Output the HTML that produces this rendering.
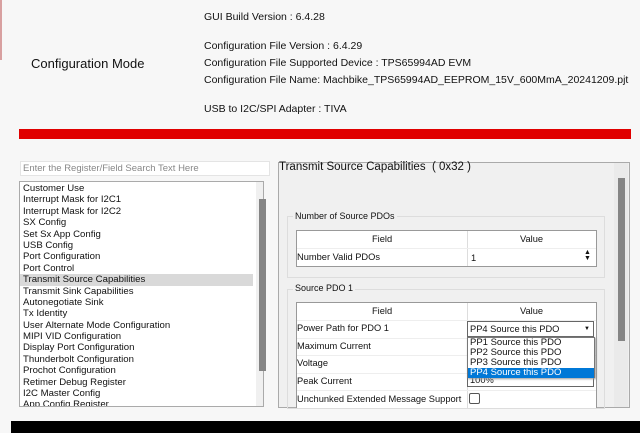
<!DOCTYPE html>
<html><head><style>
body{margin:0;width:640px;height:433px;overflow:hidden;background:#f7f7f7;font-family:"Liberation Sans",sans-serif;position:relative;color:#111}
.a{position:absolute;white-space:nowrap}
.t{font-size:10.5px}
.list div{height:11.4px;line-height:11.4px;font-size:9.6px;padding-left:3px}
table{border-collapse:collapse;font-size:9.3px}
</style></head><body>
<div class="a" style="left:0;top:0;width:2px;height:60px;background:#d8a0a0"></div>
<div class="a t" style="left:204px;top:11px">GUI Build Version : 6.4.28</div>
<div class="a" style="left:31px;top:56px;font-size:13px">Configuration Mode</div>
<div class="a t" style="left:204px;top:40px">Configuration File Version : 6.4.29</div>
<div class="a t" style="left:204px;top:57px">Configuration File Supported Device : TPS65994AD EVM</div>
<div class="a t" style="left:204px;top:74px">Configuration File Name: Machbike_TPS65994AD_EEPROM_15V_600MmA_20241209.pjt</div>
<div class="a t" style="left:204px;top:103px">USB to I2C/SPI Adapter : TIVA</div>
<div class="a" style="left:19px;top:129px;width:612px;height:10px;background:#e00000"></div>

<div class="a" style="left:20px;top:161px;width:250px;height:15px;background:#fff;border:1px solid #e4e4e4;box-sizing:border-box;font-size:9.5px;color:#888;line-height:13px;padding-left:2px">Enter the Register/Field Search Text Here</div>
<div class="a list" style="left:19px;top:181px;width:245px;height:226px;background:#fff;border:1px solid #aaa;box-sizing:border-box;overflow:hidden;padding-top:1px">
<div>Customer Use</div><div>Interrupt Mask for I2C1</div><div>Interrupt Mask for I2C2</div><div>SX Config</div><div>Set Sx App Config</div><div>USB Config</div><div>Port Configuration</div><div>Port Control</div><div style="background:#d9d9d9;width:230px">Transmit Source Capabilities</div><div>Transmit Sink Capabilities</div><div>Autonegotiate Sink</div><div>Tx Identity</div><div>User Alternate Mode Configuration</div><div>MIPI VID Configuration</div><div>Display Port Configuration</div><div>Thunderbolt Configuration</div><div>Prochot Configuration</div><div>Retimer Debug Register</div><div>I2C Master Config</div><div>App Config Register</div>
</div>
<div class="a" style="left:256px;top:182px;width:7px;height:224px;background:#f0f0f0"></div>
<div class="a" style="left:259px;top:199px;width:7px;height:172px;background:#858585"></div>

<div class="a" style="left:278px;top:162px;width:352px;height:246px;background:#f0f0f0;border:1px solid #aaa;box-sizing:border-box"></div>
<div class="a" style="left:614px;top:163px;width:14px;height:244px;background:#eaeaea"></div>
<div class="a" style="left:618px;top:178px;width:7px;height:163px;background:#858585"></div>
<div class="a" style="left:279px;top:161px;font-size:11.5px">Transmit Source Capabilities &nbsp;( 0x32 )</div>

<div class="a" style="left:287px;top:216px;width:318px;height:62px;border:1px solid #ddd;box-sizing:border-box"></div>
<div class="a" style="left:293px;top:211px;font-size:9px;background:#f0f0f0;padding:0 2px">Number of Source PDOs</div>
<div class="a" style="left:296px;top:230px;width:301px;height:37px;background:#fff;border:1px solid #999;box-sizing:border-box"></div>
<div class="a" style="left:467px;top:231px;width:1px;height:35px;background:#ddd"></div>
<div class="a" style="left:297px;top:248px;width:299px;height:1px;background:#eee"></div>
<div class="a" style="left:372px;top:234px;font-size:9.3px">Field</div>
<div class="a" style="left:520px;top:234px;font-size:9.3px">Value</div>
<div class="a" style="left:297px;top:252px;font-size:9.3px">Number Valid PDOs</div>
<div class="a" style="left:471px;top:253px;font-size:9.3px">1</div>
<div class="a" style="left:584px;top:250px;font-size:7px;line-height:6px">▲<br>▼</div>

<div class="a" style="left:287px;top:289px;width:318px;height:120px;border:1px solid #ddd;box-sizing:border-box"></div>
<div class="a" style="left:293px;top:283px;font-size:9px;background:#f0f0f0;padding:0 2px">Source PDO 1</div>
<div class="a" style="left:296px;top:302px;width:301px;height:106px;background:#fff;border:1px solid #999;border-bottom:none;box-sizing:border-box"></div>
<div class="a" style="left:467px;top:303px;width:1px;height:105px;background:#ddd"></div>
<div class="a" style="left:372px;top:306px;font-size:9.3px">Field</div>
<div class="a" style="left:520px;top:306px;font-size:9.3px">Value</div>
<div class="a" style="left:297px;top:320px;width:299px;height:1px;background:#eee"></div>
<div class="a" style="left:297px;top:338px;width:299px;height:1px;background:#eee"></div>
<div class="a" style="left:297px;top:355px;width:299px;height:1px;background:#eee"></div>
<div class="a" style="left:297px;top:373px;width:299px;height:1px;background:#eee"></div>
<div class="a" style="left:297px;top:390px;width:299px;height:1px;background:#eee"></div>
<div class="a" style="left:297px;top:323px;font-size:9.3px">Power Path for PDO 1</div>
<div class="a" style="left:297px;top:341px;font-size:9.3px">Maximum Current</div>
<div class="a" style="left:297px;top:358px;font-size:9.3px">Voltage</div>
<div class="a" style="left:297px;top:376px;font-size:9.3px">Peak Current</div>
<div class="a" style="left:297px;top:394px;font-size:9.3px">Unchunked Extended Message Support</div>
<div class="a" style="left:467px;top:321px;width:127px;height:16px;border:1px solid #666;box-sizing:border-box;font-size:9.3px;line-height:14px;padding-left:2px;background:#fff">PP4 Source this PDO<span style="position:absolute;right:3px;font-size:6px">▼</span></div>
<div class="a" style="left:467px;top:373px;width:127px;height:14px;border:1px solid #666;box-sizing:border-box;font-size:9.3px;line-height:12px;padding-left:2px;background:#fff">100%</div>
<div class="a" style="left:467px;top:337px;width:128px;height:41px;border:1px solid #777;box-sizing:border-box;background:#fff;font-size:9.5px;line-height:10px;box-shadow:1px 1px 2px #999">
<div style="padding-left:2px">PP1 Source this PDO</div><div style="padding-left:2px">PP2 Source this PDO</div><div style="padding-left:2px">PP3 Source this PDO</div><div style="padding-left:2px;background:#0078d7;color:#fff">PP4 Source this PDO</div></div>
<div class="a" style="left:469px;top:393px;width:11px;height:11px;border:1px solid #555;border-radius:2px;box-sizing:border-box;background:#fff"></div>

<div class="a" style="left:11px;top:421px;width:629px;height:12px;background:#000"></div>
</body></html>
